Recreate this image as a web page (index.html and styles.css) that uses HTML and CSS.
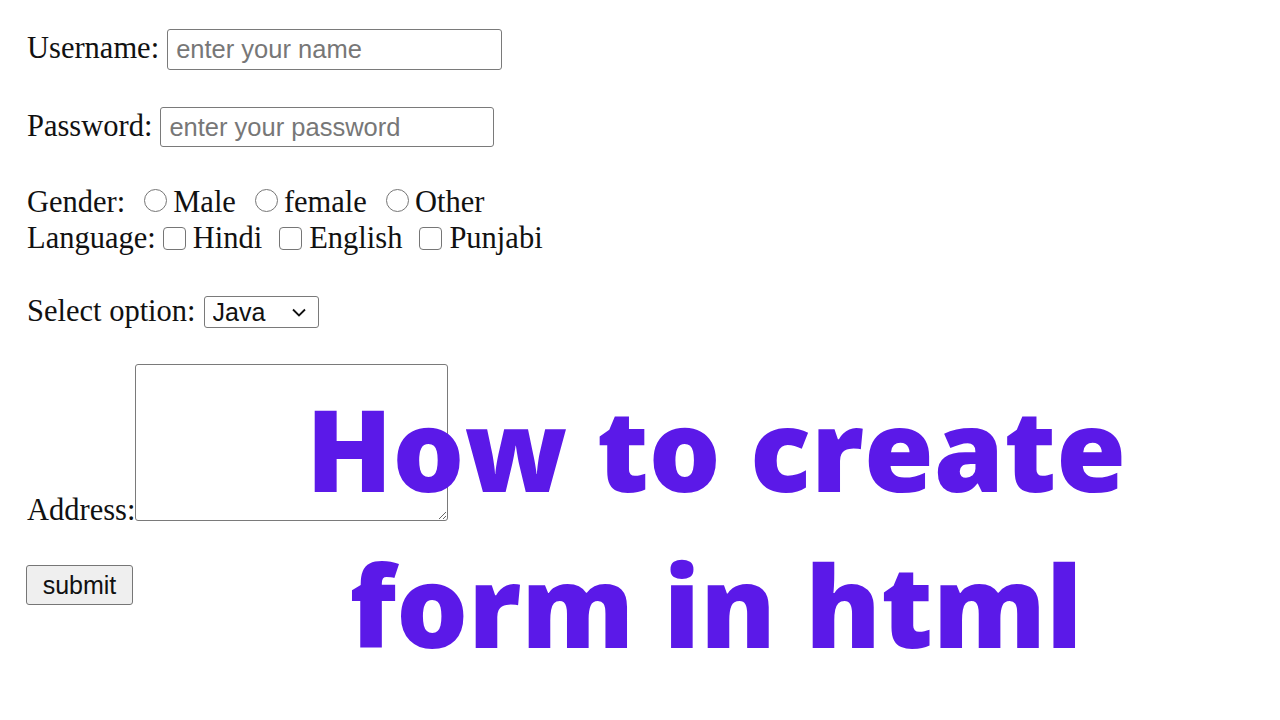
FILE: index.html
```html
<!DOCTYPE html>
<html lang="en">
<head>
<meta charset="utf-8">
<title>Form</title>
<link rel="stylesheet" href="styles.css">
</head>
<body>
<form class="form" action="#">
  <div class="row row-user">
    <label class="lbl" for="user">Username:</label>
    <input class="field field-user" id="user" type="text" placeholder="enter your name">
  </div>
  <div class="row row-pass">
    <label class="lbl" for="pass">Password:</label>
    <input class="field field-pass" id="pass" type="password" placeholder="enter your password">
  </div>
  <div class="row row-gender">
    <span class="lbl">Gender:</span>
    <input class="radio radio-first" type="radio" name="gender" id="g1"><label class="opt" for="g1">Male</label>
    <input class="radio" type="radio" name="gender" id="g2"><label class="opt" for="g2">female</label>
    <input class="radio" type="radio" name="gender" id="g3"><label class="opt" for="g3">Other</label>
  </div>
  <div class="row row-lang">
    <span class="lbl lbl-tight">Language:</span>
    <input class="check check-first" type="checkbox" id="l1"><label class="opt" for="l1">Hindi</label>
    <input class="check" type="checkbox" id="l2"><label class="opt" for="l2">English</label>
    <input class="check" type="checkbox" id="l3"><label class="opt" for="l3">Punjabi</label>
  </div>
  <div class="row row-select">
    <label class="lbl" for="course">Select option:</label>
    <span class="select-wrap">
      <select class="select" id="course">
        <option>Java</option>
        <option>Python</option>
        <option>C++</option>
      </select>
      <svg class="chev" width="14" height="9" viewBox="0 0 14 9"><path d="M1 1.5 L7 7.5 L13 1.5" fill="none" stroke="#111" stroke-width="1.8"/></svg>
    </span>
  </div>
  <div class="row row-address">
    <label class="lbl lbl-address" for="addr">Address:</label>
    <textarea class="area" id="addr"></textarea>
  </div>
  <div class="row row-submit">
    <button class="btn" type="submit">submit</button>
  </div>
</form>

<h1 class="headline">How to create<br>form in html</h1>
</body>
</html>
```

FILE: styles.css
```css
html, body {
  margin: 0;
  padding: 0;
  background: #ffffff;
}

body {
  width: 1280px;
  height: 720px;
  overflow: hidden;
  position: relative;
  font-family: "Liberation Serif", "Times New Roman", serif;
  color: #111111;
}

.form {
  display: flex;
  flex-direction: column;
  padding-left: 27px;
}

.row {
  display: flex;
  align-items: baseline;
}

.lbl,
.opt {
  font-size: 30.5px;
  line-height: 36px;
}

.lbl {
  margin-right: 8px;
}

.lbl-tight {
  margin-right: 0;
}

/* text inputs */
.field {
  box-sizing: border-box;
  height: 41px;
  margin: 0;
  padding: 0 8px;
  border: 1px solid #7a7a7a;
  border-radius: 3px;
  font-family: "Liberation Sans", Arial, sans-serif;
  font-size: 25.5px;
  color: #111;
  background: #fff;
  outline: none;
}

.field::placeholder {
  color: #777777;
}

.field-user {
  width: 335px;
}

.field-pass {
  width: 334px;
  height: 40px;
}

.row-user {
  margin-top: 29px;
}

.row-pass {
  margin-top: 37px;
}

.row-gender {
  margin-top: 37px;
}

/* radios and checkboxes */
.radio,
.check {
  appearance: none;
  -webkit-appearance: none;
  box-sizing: border-box;
  width: 23px;
  height: 23px;
  border: 1px solid #767676;
  background: #fff;
  flex: none;
}

.radio {
  border-radius: 50%;
  margin: 0 6px 0 19px;
}

.radio-first {
  margin-left: 11px;
}

.check {
  border-radius: 4px;
  margin: 0 7px 0 17px;
  position: relative;
  top: 2px;
}

.check-first {
  margin-left: 7px;
}

/* select */
.row-select {
  margin-top: 37px;
}

.select-wrap {
  position: relative;
  display: inline-flex;
}

.select {
  appearance: none;
  -webkit-appearance: none;
  box-sizing: border-box;
  width: 115px;
  height: 32px;
  margin: 0;
  padding: 0 0 0 8px;
  border: 1px solid #7a7a7a;
  border-radius: 3px;
  background: #fff;
  font-family: "Liberation Sans", Arial, sans-serif;
  font-size: 25px;
  color: #111;
}

.chev {
  position: absolute;
  right: 13px;
  top: 12px;
  pointer-events: none;
}

/* address */
.row-address {
  align-items: flex-end;
  margin-top: 35px;
}

.lbl-address {
  margin-right: 0;
  line-height: 22px;
}

.area {
  box-sizing: border-box;
  width: 313px;
  height: 157px;
  margin: 0;
  border: 1px solid #7a7a7a;
  border-radius: 3px;
  background: #fff;
  resize: both;
}

/* submit */
.row-submit {
  margin-top: 44px;
  margin-left: -1px;
}

.btn {
  box-sizing: border-box;
  width: 107px;
  height: 40px;
  padding: 0;
  border: 1px solid #767676;
  border-radius: 3px;
  background: #efefef;
  font-family: "Liberation Sans", Arial, sans-serif;
  font-size: 25px;
  color: #111;
}

/* overlay title */
.headline {
  position: absolute;
  left: 216px;
  top: 370px;
  width: 1000px;
  margin: 0;
  text-align: center;
  font-family: "Open Sans", sans-serif;
  font-weight: 800;
  font-size: 113px;
  line-height: 156px;
  color: #5b19e8;
  white-space: nowrap;
}
```
